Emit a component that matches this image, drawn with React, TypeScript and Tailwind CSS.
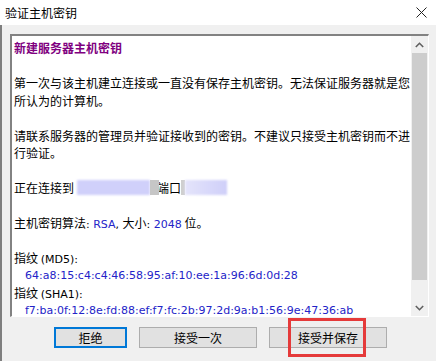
import React from 'react';

const cjk = "font-['Noto_Sans_CJK_SC',sans-serif]";
const lat = "font-['DejaVu_Sans','Noto_Sans_CJK_SC',sans-serif] text-[11px]";

function Line({ children, className = '' }: { children?: React.ReactNode; className?: string }) {
  return <div className={`h-[17.5px] leading-[17.5px] whitespace-nowrap ${className}`}>{children}</div>;
}

function Btn({ label, focused = false, wide = true }: { label: string; focused?: boolean; wide?: boolean }) {
  return (
    <div
      className={`${wide ? 'w-[118px]' : 'w-[73px]'} h-[21px] flex items-center justify-center bg-[#e1e1e1] text-[12px] text-black ${
        focused ? 'border-2 border-[#0078d7]' : 'border border-[#adadad]'
      }`}
    >
      {label}
    </div>
  );
}

export default function App() {
  return (
    <div className={`w-[436px] h-[361px] bg-[#f0f0f0] overflow-hidden ${cjk}`}>
      {/* title bar */}
      <div className="h-[25px] bg-white flex items-center justify-between pl-[5px] pr-[9px]">
        <span className="text-[12px] text-black">验证主机密钥</span>
        <svg width="11" height="11" viewBox="0 0 11 11">
          <path d="M0.5 0.5L10.5 10.5M10.5 0.5L0.5 10.5" stroke="#222" strokeWidth="1" />
        </svg>
      </div>

      <div className="flex h-[336px]">
        <div className="w-[2px] bg-[#7f7f7f]" />
        <div className="flex-1 pl-[8px] pr-[7px] pt-[9px]">
          {/* content box */}
          <div className="h-[283px] flex border-t-2 border-l-2 border-t-[#828282] border-l-[#828282] border-r border-b border-r-white border-b-white bg-white">
            <div className="flex-1 overflow-hidden pl-[2px] pt-[3px] text-[12px] text-black">
              <Line className="font-bold text-[#800080]">新建服务器主机密钥</Line>
              <Line />
              <Line>第一次与该主机建立连接或一直没有保存主机密钥。无法保证服务器就是您</Line>
              <Line>所认为的计算机。</Line>
              <Line />
              <Line>请联系服务器的管理员并验证接收到的密钥。不建议只接受主机密钥而不进</Line>
              <Line>行验证。</Line>
              <Line />
              <Line className="flex items-center">
                <span>正在连接到</span>
                <span className="ml-[3px] inline-block h-[15px] w-[73px] bg-[#d0d0fa] blur-[1px]" />
                <span className="inline-block h-[15px] w-[9px] bg-[#c6c6c6] blur-[0.5px]" />
                <span className="-ml-[2px]">端口</span>
                <span className="inline-block h-[15px] w-[4px] bg-[#cfcfcf] blur-[0.5px]" />
                <span className="inline-block h-[15px] w-[42px] bg-gradient-to-r from-[#e4e4fb] to-[#cfcff9] blur-[1px]" />
              </Line>
              <Line />
              <Line>
                主机密钥算法<span className={lat}>: </span>
                <span className={`${lat} text-[#2323c8]`}>RSA</span>
                <span className={lat}>, </span>大小<span className={lat}>: </span>
                <span className={`${lat} text-[#2323c8]`}>2048</span> 位。
              </Line>
              <Line />
              <Line>
                指纹 <span className={lat}>(MD5):</span>
              </Line>
              <Line className={`pl-[11px] ${lat} text-[#2323c8]`}>64:a8:15:c4:c4:46:58:95:af:10:ee:1a:96:6d:0d:28</Line>
              <Line>
                指纹 <span className={lat}>(SHA1):</span>
              </Line>
              <Line className={`pl-[11px] ${lat} text-[#2323c8]`}>f7:ba:0f:12:8e:fd:88:ef:f7:fc:2b:97:2d:9a:b1:56:9e:47:36:ab</Line>
            </div>

            {/* scrollbar */}
            <div className="w-[17px] bg-[#f0f0f0] flex flex-col items-center">
              <div className="h-[17px] w-full flex items-center justify-center">
                <svg width="9" height="6" viewBox="0 0 9 6">
                  <path d="M0.8 5L4.5 1.3L8.2 5" fill="none" stroke="#606060" strokeWidth="1.6" />
                </svg>
              </div>
              <div className="w-[15px] h-[227px] bg-[#cdcdcd]" />
              <div className="flex-1" />
              <div className="h-[17px] w-full flex items-center justify-center">
                <svg width="9" height="6" viewBox="0 0 9 6">
                  <path d="M0.8 1L4.5 4.7L8.2 1" fill="none" stroke="#606060" strokeWidth="1.6" />
                </svg>
              </div>
            </div>
          </div>

          {/* buttons */}
          <div className="flex mt-[10px] pl-[44px] gap-[12px]">
            <Btn label="拒绝" focused wide={false} />
            <Btn label="接受一次" />
            <div className="relative">
              <Btn label="接受并保存" />
              <div className="absolute left-[19px] top-[-9px] w-[78px] h-[39px] border-[3px] border-[#e53a3a]" />
            </div>
          </div>
        </div>
      </div>
    </div>
  );
}
